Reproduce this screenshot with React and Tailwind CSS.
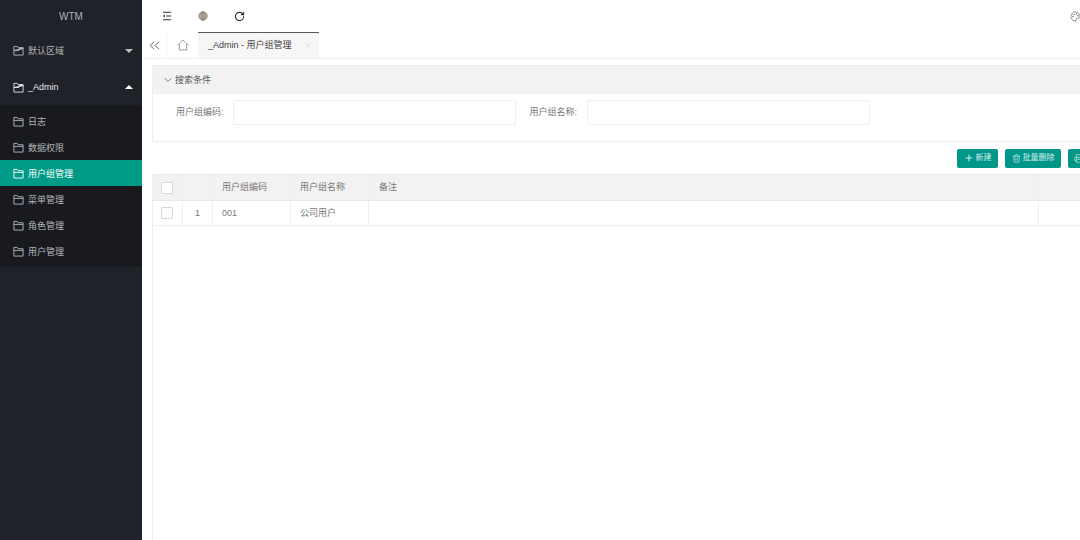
import { ChevronDown, ChevronsLeft, Palette, Plus, Printer, RotateCw, Trash2, X } from 'lucide-react'

const FONT = "font-['Liberation_Sans','Noto_Sans_CJK_SC',sans-serif]"

const subMenu = ['日志', '数据权限', '用户组管理', '菜单管理', '角色管理', '用户管理']

function FolderIcon({ className, solid }) {
  return (
    <svg viewBox="0 0 12 12" className={className} fill="none" stroke="currentColor" strokeWidth="1">
      <path d="M1 11V1.5h3.6l1 1.5H11v8z" />
      {solid ? <path d="M1 6h5.2l1-3H11v1z" fill="currentColor" /> : <path d="M1 4.8h10" />}
    </svg>
  )
}

function ShrinkIcon({ className }) {
  return (
    <svg viewBox="0 0 12 12" className={className} fill="none" stroke="currentColor" strokeWidth="1.2">
      <path d="M1 1.5h10M5 6h6M1 10.5h10" />
      <path d="M3.4 4v4L1 6z" fill="currentColor" stroke="none" />
    </svg>
  )
}

function SiteIcon({ className }) {
  return (
    <svg viewBox="0 0 12 12" className={className} fill="none" stroke="currentColor" strokeWidth="0.9">
      <circle cx="6" cy="6" r="5" />
      <ellipse cx="6" cy="6" rx="2.4" ry="5" />
      <path d="M6 1v10M1 6h10M1.7 3.5h8.6M1.7 8.5h8.6" />
    </svg>
  )
}

function HomeIcon({ className }) {
  return (
    <svg viewBox="0 0 12 12" className={className} fill="none" stroke="currentColor" strokeWidth="0.8">
      <path d="M0.5 6.3 6 1l5.5 5.3M2.3 5v6h7.4V5" />
    </svg>
  )
}

function Caret({ up }) {
  return (
    <span
      className={
        up
          ? 'h-0 w-0 border-x-[4.5px] border-b-[4.5px] border-x-transparent border-b-white'
          : 'h-0 w-0 border-x-[4.5px] border-t-[4.5px] border-x-transparent border-t-[#bdbdbd]'
      }
    />
  )
}

function Sidebar() {
  return (
    <aside className="flex w-[142px] shrink-0 flex-col bg-[#20222a] text-[9px] text-[#b5b6b8]">
      <div className="flex h-[32px] items-center justify-center text-[10px] text-[#b0b1b4]">WTM</div>
      <div className="flex h-[37px] items-center pl-[13px] pr-[9px]">
        <FolderIcon solid className="mr-[4px] h-[11px] w-[11px]" />
        <span className="flex-1 pt-[2px]">默认区域</span>
        <Caret />
      </div>
      <div className="flex h-[36px] items-center pl-[13px] pr-[9px] text-[#e4e4e5]">
        <FolderIcon solid className="mr-[4px] h-[11px] w-[11px]" />
        <span className="flex-1 pt-[2px]">_Admin</span>
        <Caret up />
      </div>
      <div className="bg-[#191a20] py-[3px]">
        {subMenu.map((name) => (
          <div
            key={name}
            className={
              name === '用户组管理'
                ? 'flex h-[26px] items-center bg-[#009b87] pl-[13px] text-white'
                : 'flex h-[26px] items-center pl-[13px]'
            }
          >
            <FolderIcon className="mr-[4px] h-[11px] w-[11px]" />
            <span className="pt-[3px]">{name}</span>
          </div>
        ))}
      </div>
    </aside>
  )
}

function TopBar() {
  return (
    <header className="flex h-[32px] shrink-0 items-center text-[#333]">
      <ShrinkIcon className="ml-[20px] h-[10px] w-[10px]" />
      <SiteIcon className="ml-[26px] h-[10px] w-[10px] text-[#6e5f4c]" />
      <RotateCw className="ml-[26px] h-[11px] w-[11px]" strokeWidth={2.4} />
      <Palette className="ml-auto mr-[71px] h-[11px] w-[11px] text-[#666]" strokeWidth={1.5} />
    </header>
  )
}

function TabBar() {
  return (
    <div className="flex h-[27px] shrink-0 items-stretch border-b border-[#eeeeee]">
      <div className="flex w-[25px] items-center justify-center border-r border-[#f4f4f4] text-[#444]">
        <ChevronsLeft className="h-[17px] w-[17px]" strokeWidth={1.2} />
      </div>
      <div className="flex w-[31px] items-center justify-center text-[#888]">
        <HomeIcon className="h-[12px] w-[12px]" />
      </div>
      <div className="relative flex w-[121px] items-center bg-[#f6f6f6] pl-[10px] text-[9px] text-[#444]">
        <span className="absolute inset-x-0 top-0 h-[1px] bg-[#5a5a5e]" />
        <span className="pt-[2px]">_Admin - 用户组管理</span>
        <X className="absolute right-[8px] top-[10px] h-[7px] w-[7px] text-[#bbb]" strokeWidth={1.5} />
      </div>
    </div>
  )
}

function SearchField({ label, className }) {
  return (
    <>
      <span className={className}>{label}:</span>
      <div className="h-[25px] w-[283px] rounded-[2px] border border-[#eeeeee] bg-white" />
    </>
  )
}

function SearchPanel() {
  return (
    <section className="h-[77px] border border-[#eeeeee]">
      <div className="flex h-[28px] items-center bg-[#f2f2f2] pl-[9px] text-[9px] text-[#555]">
        <ChevronDown className="mr-[1px] h-[12px] w-[12px]" strokeWidth={1.5} />
        <span className="pt-[1px]">搜索条件</span>
      </div>
      <div className="flex items-center pt-[6px] text-[9px] text-[#777]">
        <SearchField label="用户组编码" className="ml-[23px] mr-[9px]" />
        <SearchField label="用户组名称" className="ml-[14px] mr-[10px]" />
      </div>
    </section>
  )
}

function Toolbar() {
  const btn = 'flex h-[19px] items-center rounded-[2px] bg-[#009688] text-[8px] text-[#d7f0ec]'
  return (
    <div className="flex h-[32px] items-center pl-[805px]">
      <button type="button" className={`${btn} w-[41px] justify-center`}>
        <Plus className="mr-[2px] h-[10px] w-[10px]" strokeWidth={2.5} />
        新建
      </button>
      <button type="button" className={`${btn} ml-[7px] w-[56px] justify-center`}>
        <Trash2 className="mr-[2px] h-[9px] w-[9px]" strokeWidth={1.8} />
        批量删除
      </button>
      <button type="button" aria-label="导出" className={`${btn} ml-[7px] w-[56px] pl-[6px]`}>
        <Printer className="h-[9px] w-[9px]" strokeWidth={1.8} />
      </button>
    </div>
  )
}

function Checkbox() {
  return <span className="block h-[12px] w-[12px] rounded-[1px] border border-[#d8d8d8] bg-white" />
}

const colGrid = 'grid grid-cols-[30px_30px_78px_78px_670px_1fr]'
const cell = 'flex items-center border-r border-[#eeeeee] pl-[9px]'

function DataTable() {
  return (
    <div className="flex-1 border-l border-[#eeeeee] text-[9px] text-[#777]">
      <div className={`${colGrid} h-[27px] border-y border-[#e8e8e8] bg-[#f2f2f2]`}>
        <div className={`${cell} !pl-[8px]`}><Checkbox /></div>
        <div className={cell} />
        <div className={cell}>用户组编码</div>
        <div className={cell}>用户组名称</div>
        <div className={`${cell} !pl-[10px]`}>备注</div>
        <div />
      </div>
      <div className={`${colGrid} h-[25px] border-b border-[#eeeeee]`}>
        <div className={`${cell} !pl-[8px]`}><Checkbox /></div>
        <div className={`${cell} justify-center !pl-0 pt-[1px]`}>1</div>
        <div className={`${cell} pt-[1px]`}>001</div>
        <div className={`${cell} pt-[1px]`}>公司用户</div>
        <div className={cell} />
        <div />
      </div>
    </div>
  )
}

export default function App() {
  return (
    <div className={`flex h-[540px] w-[1080px] overflow-hidden bg-white ${FONT}`}>
      <Sidebar />
      <main className="flex w-[938px] flex-col overflow-hidden">
        <div className="flex w-[1010px] flex-1 flex-col">
          <TopBar />
          <TabBar />
          <div className="flex flex-1 flex-col pl-[10px] pt-[6px]">
            <SearchPanel />
            <Toolbar />
            <DataTable />
          </div>
        </div>
      </main>
    </div>
  )
}
